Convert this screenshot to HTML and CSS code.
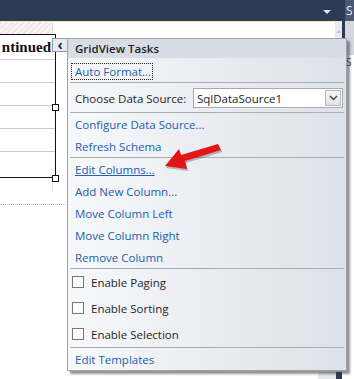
FILE: index.html
```html
<!DOCTYPE html>
<html>
<head>
<meta charset="utf-8">
<link rel="stylesheet" href="styles.css">
</head>
<body>
<div class="screen">
  <div class="main">
    <div class="titlebar"><span class="drop-tri"></span></div>
    <div class="editor">
      <div class="content">
        <div class="hatch"></div>
        <div class="gridview">
          <div class="gv-head">ntinued</div>
          <div class="gv-row"></div>
          <div class="gv-row"></div>
          <div class="gv-row"></div>
          <div class="gv-row"></div>
          <div class="gv-row last"></div>
        </div>
        <div class="below"></div>
        <div class="dotted"></div>
      </div>
      <div class="vscroll"><span class="up-tri"></span></div>
    </div>
    <div class="hscroll"><span class="hs-light"></span><span class="hs-dark"></span></div>
  </div>
  <div class="divider"></div>
  <div class="side">
    <div class="side-head">S</div>
    <div class="side-tool"></div>
    <div class="side-body">S</div>
  </div>

  <span class="handle h-mid"></span>
  <span class="handle h-bot"></span>

  <div class="smart-btn">&lsaquo;</div>

  <div class="tasks">
    <div class="tasks-head">GridView Tasks</div>
    <div class="tasks-body">
      <div class="sec sec-first">
        <div class="item"><a class="link focus">Auto Format...</a></div>
      </div>
      <div class="sep"></div>
      <div class="sec sec-ds">
        <span class="label">Choose Data Source:</span>
        <div class="combo"><span class="combo-text">SqlDataSource1</span><span class="combo-btn"><svg width="9" height="6" viewBox="0 0 9 6"><path d="M1 1 L4.5 4.5 L8 1" fill="none" stroke="#444" stroke-width="1.4"/></svg></span></div>
      </div>
      <div class="sep"></div>
      <div class="sec">
        <div class="item"><a class="link">Configure Data Source...</a></div>
        <div class="item"><a class="link">Refresh Schema</a></div>
      </div>
      <div class="sep"></div>
      <div class="sec">
        <div class="item"><a class="link under">Edit Columns...</a></div>
        <div class="item"><a class="link">Add New Column...</a></div>
        <div class="item"><a class="link">Move Column Left</a></div>
        <div class="item"><a class="link">Move Column Right</a></div>
        <div class="item"><a class="link">Remove Column</a></div>
      </div>
      <div class="sep"></div>
      <div class="sec sec-checks">
        <div class="check"><span class="box"></span><span>Enable Paging</span></div>
        <div class="check"><span class="box"></span><span>Enable Sorting</span></div>
        <div class="check"><span class="box"></span><span>Enable Selection</span></div>
      </div>
      <div class="sep"></div>
      <div class="sec">
        <div class="item"><a class="link">Edit Templates</a></div>
      </div>
    </div>
  </div>

  <svg class="arrow" width="70" height="34" viewBox="0 0 70 34">
    <g transform="translate(1,1)" fill="rgba(0,0,0,0.25)">
      <path d="M55 2 L58 8 L22 19 L24 27 L2 24 L16 7 L18 13 Z"/>
    </g>
    <path d="M55 1 L58 7 L22 18 L24 26 L2 23 L16 6 L18 12 Z" fill="#e41414"/>
  </svg>
</div>
</body>
</html>
```

FILE: styles.css
```css
* { box-sizing: border-box; }
html, body { margin: 0; padding: 0; background: #fff; }
body { font-family: "Open Sans", "Noto Sans", sans-serif; }

.screen {
  position: relative;
  width: 354px;
  height: 379px;
  overflow: hidden;
  display: grid;
  grid-template-columns: 342px 3px 9px;
}

.main { display: flex; flex-direction: column; height: 379px; }
.titlebar {
  height: 21px;
  background: #2b3a55;
  display: flex;
  justify-content: flex-end;
  align-items: center;
  padding-right: 11px;
}
.drop-tri {
  width: 0; height: 0;
  border-left: 4px solid transparent;
  border-right: 4px solid transparent;
  border-top: 4px solid #dfe6f0;
  margin-top: 2px;
}
.editor {
  flex: 1;
  display: grid;
  grid-template-columns: 335px 7px;
}
.content {
  border-top: 1px solid #f3eaa8;
  background: #fff;
}
.hatch {
  width: 53px;
  height: 12px;
  border-right: 1px solid #e2d6d6;
  background: repeating-linear-gradient(135deg, #f4e6e6 0 2px, #fbf5f5 2px 4px);
}
.gridview {
  width: 56px;
  border-top: 1px solid #111;
  border-right: 1px solid #111;
  border-bottom: 1px solid #111;
}
.gv-head {
  height: 25px;
  border-bottom: 1px solid #d9c9c9;
  font-family: "Liberation Serif", serif;
  font-weight: bold;
  font-size: 15px;
  line-height: 24px;
  text-align: right;
  padding-right: 4px;
  white-space: nowrap;
  overflow: hidden;
  color: #111;
}
.gv-row { height: 23px; border-bottom: 1px solid #d9c9c9; }
.gv-row.last { height: 25px; border-bottom: none; }
.below { width: 53px; height: 12px; border-right: 1px solid #ece4e4; }
.dotted { margin-top: 14px; width: 66px; border-top: 1px dotted #b8b8b8; }

.vscroll {
  background: #e9eaee;
  border-top: 1px solid #f3eaa8;
  display: flex;
  justify-content: center;
  padding-top: 8px;
}
.up-tri {
  width: 0; height: 0;
  border-left: 3px solid transparent;
  border-right: 3px solid transparent;
  border-bottom: 3px solid #c6c9d0;
}
.hscroll { height: 7px; display: flex; justify-content: flex-end; }
.hs-light { width: 18px; background: #e6e7ea; }
.hs-dark { width: 6px; background: #2b3a55; }

.divider { background: linear-gradient(#2b3a55 0 60px, #fff 60px); }
.side { display: flex; flex-direction: column; background: #fff; }
.side-head {
  height: 21px;
  background: #4b5773;
  color: #e8ecf3;
  font-size: 12px;
  line-height: 21px;
  padding-left: 1px;
  overflow: hidden;
}
.side-tool { height: 34px; background: #d3d7de; }
.side-body { font-size: 10px; line-height: 14px; color: #333; padding-left: 1px; }

.handle {
  position: absolute;
  left: 52px;
  width: 7px;
  height: 7px;
  background: #fff;
  border: 1px solid #111;
}
.h-mid { top: 104px; }
.h-bot { top: 175px; }

.smart-btn {
  position: absolute;
  left: 52px;
  top: 38px;
  width: 15px;
  height: 14px;
  background: #e6ebf2;
  border: 1px solid #8e9bb0;
  border-right: none;
  color: #223;
  font-size: 14px;
  font-weight: bold;
  line-height: 11px;
  text-align: center;
}

.tasks {
  position: absolute;
  left: 67px;
  top: 38px;
  width: 280px;
  height: 333px;
  border: 1px solid #9ea3aa;
  box-shadow: 3px 3px 2px rgba(60, 60, 70, 0.55);
  background: linear-gradient(90deg, #f7f8fa, #dde1e9);
  font-size: 11.5px;
  color: #1e1e1e;
  display: flex;
  flex-direction: column;
}
.tasks-head {
  height: 20px;
  background: #d8dde5;
  font-weight: 600;
  line-height: 19px;
  padding-left: 7px;
  color: #1e1e1e;
}
.tasks-body { flex: 1; display: flex; flex-direction: column; }
.sec { display: flex; flex-direction: column; }
.sec-first { padding-top: 2px; }
.item { height: 22px; display: flex; align-items: center; padding-left: 7px; }
.link { color: #2060b0; text-decoration: none; white-space: nowrap; }
.link.under { text-decoration: underline; }
.link.focus {
  outline: 1px dotted #222;
  outline-offset: 0;
  padding: 0 1px;
  margin-left: -3px;
  padding-left: 3px;
  line-height: 15px;
}
.sep { height: 1px; margin: 0 2px; background: #a9adb4; }
.sec-ds {
  flex-direction: row;
  align-items: center;
  padding: 5px 2px 4px 7px;
}
.label { width: 118px; white-space: nowrap; }
.combo {
  width: 150px;
  height: 20px;
  background: #fff;
  border: 1px solid #a5a8ad;
  display: flex;
  align-items: center;
  justify-content: space-between;
  padding-left: 3px;
  padding-right: 1px;
}
.combo-text { color: #1e1e1e; }
.combo-btn {
  width: 16px;
  height: 16px;
  border: 1px solid #b4b7bc;
  background: linear-gradient(#f6f6f6, #e2e2e2);
  display: flex;
  align-items: center;
  justify-content: center;
}
.sec-checks { padding-top: 0; }
.check {
  height: 26px;
  display: flex;
  align-items: center;
  padding-left: 4px;
  gap: 7px;
  white-space: nowrap;
}
.box {
  width: 12px;
  height: 12px;
  border: 1px solid #777;
  background: #fdfdfd;
}

.arrow {
  position: absolute;
  left: 163px;
  top: 143px;
}
```
